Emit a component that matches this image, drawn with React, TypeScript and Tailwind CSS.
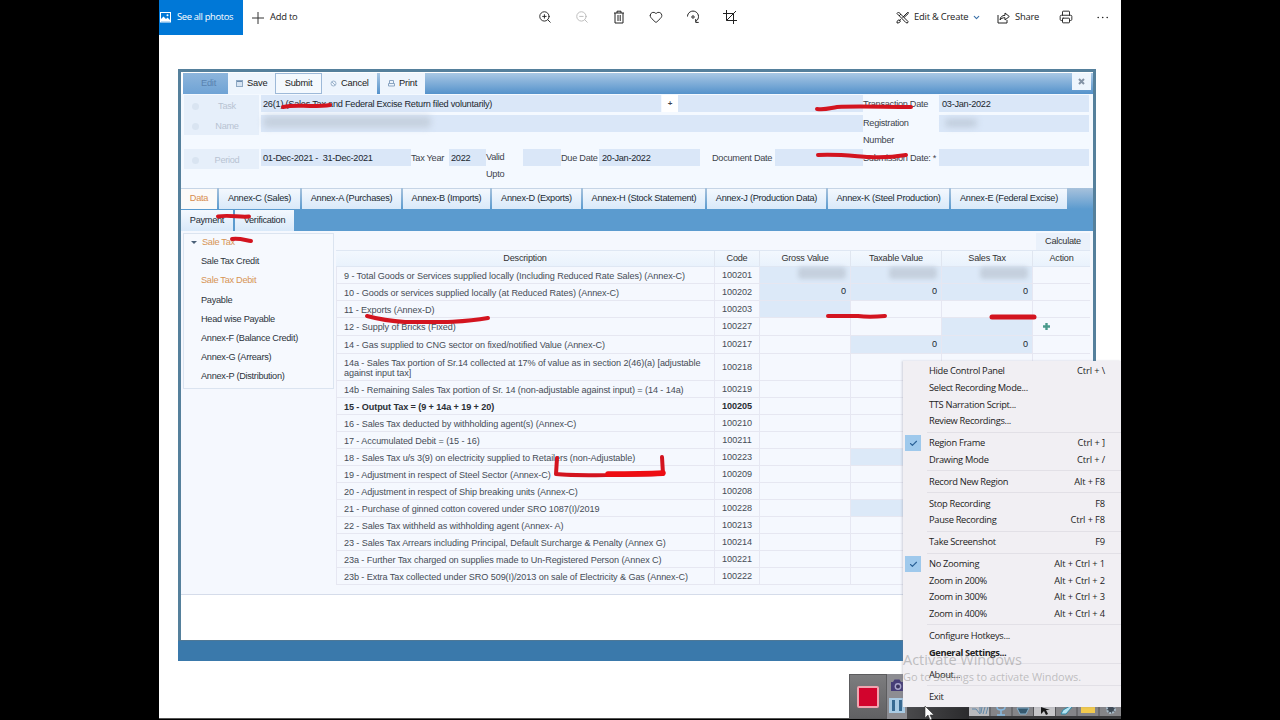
import type { ReactNode } from "react";
import { Check, ChevronDown, Crop, Heart, Printer, ZoomIn, ZoomOut } from "lucide-react";
import clsx from "clsx";

type Cell = "fill" | "zero" | "blur" | "";

interface Row {
  label: string;
  code: string;
  height: string;
  cells: Cell[];
  bold?: boolean;
  add?: boolean;
}

const ROWS: Row[] = [
  { label: "9 - Total Goods or Services supplied locally (Including Reduced Rate Sales) (Annex-C)", code: "100201", height: "h-[17px]", cells: ["blur", "blur", "blur"] },
  { label: "10 - Goods or services supplied locally (at Reduced Rates) (Annex-C)", code: "100202", height: "h-[17px]", cells: ["zero", "zero", "zero"] },
  { label: "11 - Exports (Annex-D)", code: "100203", height: "h-[17px]", cells: ["fill", "", ""] },
  { label: "12 - Supply of Bricks (Fixed)", code: "100227", height: "h-[18px]", cells: ["", "", "fill"], add: true },
  { label: "14 - Gas supplied to CNG sector on fixed/notified Value (Annex-C)", code: "100217", height: "h-[18px]", cells: ["", "zero", "zero"] },
  { label: "14a - Sales Tax portion of Sr.14 collected at 17% of value as in section 2(46)(a) [adjustable against input tax]", code: "100218", height: "h-[27px]", cells: ["", "", ""] },
  { label: "14b - Remaining Sales Tax portion of Sr. 14 (non-adjustable against input) = (14 - 14a)", code: "100219", height: "h-[17px]", cells: ["", "", ""] },
  { label: "15 - Output Tax = (9 + 14a + 19 + 20)", code: "100205", height: "h-[17px]", cells: ["", "", ""], bold: true },
  { label: "16 - Sales Tax deducted by withholding agent(s) (Annex-C)", code: "100210", height: "h-[17px]", cells: ["", "", ""] },
  { label: "17 - Accumulated Debit = (15 - 16)", code: "100211", height: "h-[17px]", cells: ["", "", ""] },
  { label: "18 - Sales Tax u/s 3(9) on electricity supplied to Retailers (non-Adjustable)", code: "100223", height: "h-[17px]", cells: ["", "fill", ""] },
  { label: "19 - Adjustment in respect of Steel Sector (Annex-C)", code: "100209", height: "h-[17px]", cells: ["", "", ""] },
  { label: "20 - Adjustment in respect of Ship breaking units (Annex-C)", code: "100208", height: "h-[17px]", cells: ["", "", ""] },
  { label: "21 - Purchase of ginned cotton covered under SRO 1087(I)/2019", code: "100228", height: "h-[17px]", cells: ["", "fill", ""] },
  { label: "22 - Sales Tax withheld as withholding agent (Annex- A)", code: "100213", height: "h-[17px]", cells: ["", "", ""] },
  { label: "23 - Sales Tax Arrears including Principal, Default Surcharge & Penalty (Annex G)", code: "100214", height: "h-[17px]", cells: ["", "", ""] },
  { label: "23a - Further Tax charged on supplies made to Un-Registered Person (Annex C)", code: "100221", height: "h-[17px]", cells: ["", "", ""] },
  { label: "23b - Extra Tax collected under SRO 509(I)/2013 on sale of Electricity & Gas (Annex-C)", code: "100222", height: "h-[17px]", cells: ["", "", ""] },
];

const TABS = [
  { label: "Data", width: "w-9" },
  { label: "Annex-C (Sales)", width: "w-[81px]" },
  { label: "Annex-A (Purchases)", width: "w-[99px]" },
  { label: "Annex-B (Imports)", width: "w-[87px]" },
  { label: "Annex-D (Exports)", width: "w-[89px]" },
  { label: "Annex-H (Stock Statement)", width: "w-[122px]" },
  { label: "Annex-J (Production Data)", width: "w-[119px]" },
  { label: "Annex-K (Steel Production)", width: "w-[121px]" },
  { label: "Annex-E (Federal Excise)", width: "w-[116px]" },
];

const SIDE_ITEMS = [
  "Sale Tax Credit",
  "Sale Tax Debit",
  "Payable",
  "Head wise Payable",
  "Annex-F (Balance Credit)",
  "Annex-G (Arrears)",
  "Annex-P (Distribution)",
];

interface MenuEntry {
  label: string;
  keys?: string;
  checked?: boolean;
  bold?: boolean;
}

const MENU: MenuEntry[][] = [
  [
    { label: "Hide Control Panel", keys: "Ctrl + \\" },
    { label: "Select Recording Mode..." },
    { label: "TTS Narration Script..." },
    { label: "Review Recordings..." },
  ],
  [
    { label: "Region Frame", keys: "Ctrl + ]", checked: true },
    { label: "Drawing Mode", keys: "Ctrl + /" },
  ],
  [{ label: "Record New Region", keys: "Alt + F8" }],
  [
    { label: "Stop Recording", keys: "F8" },
    { label: "Pause Recording", keys: "Ctrl + F8" },
  ],
  [{ label: "Take Screenshot", keys: "F9" }],
  [
    { label: "No Zooming", keys: "Alt + Ctrl + 1", checked: true },
    { label: "Zoom in 200%", keys: "Alt + Ctrl + 2" },
    { label: "Zoom in 300%", keys: "Alt + Ctrl + 3" },
    { label: "Zoom in 400%", keys: "Alt + Ctrl + 4" },
  ],
  [{ label: "Configure Hotkeys..." }, { label: "General Settings...", bold: true }],
  [{ label: "About..." }],
  [{ label: "Exit" }],
];

function PhotosBar() {
  return (
    <div className="flex h-[35px] items-center text-[9.4px] tracking-[-0.22px] text-[#222] font-['Open_Sans','Noto_Sans',sans-serif] whitespace-nowrap">
      <div className="flex h-full w-[84px] items-center bg-[#0078d7] text-white">
        <svg className="ml-px h-[11px] w-[11px]" viewBox="0 0 11 11">
          <rect x="0.5" y="0.5" width="10" height="9.5" fill="none" stroke="white" />
          <path d="M1 9.5V7l2.500-2.500L6 7l1.500-1.500L10 8v1.500z" fill="white" />
          <circle cx="7.500" cy="3.200" r="1" fill="white" />
        </svg>
        <span className="ml-1.5 tracking-[-0.35px]">See all photos</span>
      </div>
      <svg className="ml-[9px] h-3 w-3" viewBox="0 0 12 12" stroke="#333" fill="none">
        <path d="M6 0v12M0 6h12" />
      </svg>
      <span className="ml-1.5 w-[30px]">Add to</span>
      <div className="mb-px ml-[238px] flex w-[199px] items-center justify-between">
        <ZoomIn size={14} strokeWidth={1.6} />
        <ZoomOut size={14} strokeWidth={1.5} className="text-[#b5b5b5]" />
        <svg className="h-[14px] w-[14px]" viewBox="0 0 14 14" stroke="#222" fill="none">
          <path d="M2 3h10M5 3V1.200h4V3M3 3v10h8V3M6 5v6M8.200 5v6" />
        </svg>
        <Heart size={14} strokeWidth={1.6} />
        <svg className="h-[14px] w-[14px]" viewBox="0 0 14 14" stroke="#222" fill="none">
          <path d="M1.500 6.500a5.500 5.500 0 1 1 8.500 4.700M9.700 9v3.400h3" />
          <circle cx="7" cy="7" r="1.200" />
        </svg>
        <svg className="h-[14px] w-[14px]" viewBox="0 0 14 14" stroke="#222" fill="none">
          <path d="M3.500 0v10.500H14M0 3.500h10.500V14M3.500 10.500 13 1" />
        </svg>
      </div>
      <svg className="mb-px ml-[159px] h-[13px] w-[13px]" viewBox="0 0 13 13" stroke="#222" fill="none">
        <path d="M1 2.500 2.500 1l9.500 9.500-.5 1.500-1.500-.3zM3 5l2-2M11.800 1.200 6.500 6.500M4.800 8.200 3 10M12 1c.6.6.4 1.400 0 1.800L8 6.500M1 12c0-2 .5-3 2-3s1.500 1.500 1 2-1.500 1-3 1z" />
      </svg>
      <span className="ml-[5px] w-[55px]">Edit &amp; Create</span>
      <ChevronDown size={9} strokeWidth={3} className="ml-[3px] text-[#3a70a8]" />
      <svg className="mb-px ml-[16px] h-[13px] w-[13px]" viewBox="0 0 13 13" stroke="#222" fill="none">
        <path d="M1 4v8h9V9M3 9c.3-3 2-4.500 5-4.700V2l4.300 3.500L8 9V6.700C5.500 6.700 4 7.500 3 9z" />
      </svg>
      <span className="ml-[5px] w-[24px]">Share</span>
      <Printer size={14} strokeWidth={1.6} className="mb-px ml-[20px]" />
      <svg className="mb-px ml-[24px] h-1 w-3" viewBox="0 0 12 4" fill="#222">
        <circle cx="1.200" cy="2.500" r=".8" />
        <circle cx="5.700" cy="2.500" r=".8" />
        <circle cx="10.200" cy="2.500" r=".8" />
      </svg>
    </div>
  );
}

function ActionBar() {
  return (
    <div className="ml-0.5 mt-px flex h-[21px] items-stretch bg-linear-to-b from-[#a9c8e4] to-[#5492cb] text-[9.3px] tracking-[-0.2px] text-[#222]">
      <div className="flex w-[45px] items-center justify-center bg-linear-to-b from-[#8db5dc] to-[#6fa3d5] pl-1.5 text-[#5983b0]">Edit</div>
      <div className="flex w-[47px] items-center bg-[#eef5fd] pl-2">
        <svg className="mr-1 h-[7px] w-[7px]" viewBox="0 0 7 7">
          <rect x=".5" y=".5" width="6" height="6" fill="#d7e4f2" stroke="#8fa9c4" />
          <path d="M1 1.500h5" stroke="#6d8cae" />
        </svg>
        Save
      </div>
      <div className="flex w-[47px] items-center justify-center border border-[#9db9d8] bg-[#f4f9fe]">Submit</div>
      <div className="flex w-[55px] items-center bg-[#eef5fd] pl-2">
        <svg className="mr-1 h-[7px] w-[7px]" viewBox="0 0 7 7" fill="none" stroke="#9db4cc">
          <circle cx="3.500" cy="3.500" r="2.500" />
          <path d="M2 2l3 3" />
        </svg>
        Cancel
      </div>
      <div className="ml-[3px] flex w-[45px] items-center bg-[#eef5fd] pl-2">
        <svg className="mr-1 h-[7px] w-[7px]" viewBox="0 0 7 7" fill="none" stroke="#8aa5c2">
          <path d="M1.500 3V.5h4V3M.5 6h6V3.500h-6z" />
        </svg>
        Print
      </div>
      <div className="ml-auto mr-0.5 flex h-[17px] w-[19px] items-center justify-center bg-[#edf5fd]">
        <svg className="h-[7px] w-[7px]" viewBox="0 0 7 7">
          <path d="M1 1l5 5M6 1 1 6" stroke="#8393a5" strokeWidth="2" />
        </svg>
      </div>
    </div>
  );
}

function Caption({ children }: { children: ReactNode }) {
  return (
    <div className="mr-0.5 flex h-5 w-[75px] items-center bg-[#e6effa] pt-0.5 text-[#b8c3d2]">
      <span className="ml-2 h-[7px] w-[7px] rounded-full bg-[#d9e4f1]" />
      <span className="w-[56px] text-center">{children}</span>
    </div>
  );
}

function Field({ width, children }: { width: string; children?: ReactNode }) {
  return <div className={clsx("flex h-[17px] shrink-0 items-center bg-[#dae7f8] pl-0.5 text-[#20262e]", width)}>{children}</div>;
}

function TaskForm() {
  return (
    <div className="flex h-[94px] flex-col bg-[#f4f9ff] pl-[3px] pt-px text-[9.2px] leading-[18px] tracking-[-0.28px] whitespace-nowrap text-[#3c434c]">
      <div className="flex h-5 items-start">
        <Caption>Task</Caption>
        <Field width="w-[400px]">
          <span className="tracking-[-0.25px]">26(1) (Sales Tax and Federal Excise Return filed voluntarily)</span>
        </Field>
        <div className="ml-px flex h-[17px] w-4 items-center justify-center bg-white text-[8px] font-bold">+</div>
        <Field width="w-[185px]" />
        <span className="w-[76px]">Transaction Date</span>
        <Field width="w-[150px]"><span className="pl-px">03-Jan-2022</span></Field>
      </div>
      <div className="flex h-[34px] items-start">
        <Caption>Name</Caption>
        <Field width="w-[602px]">
          <div className="-mt-1 h-3 w-[168px] rounded bg-[#c6d1df] blur-[3px]" />
        </Field>
        <span className="w-[76px] leading-[17px]">Registration<br />Number</span>
        <Field width="w-[150px]">
          <div className="ml-1 -mt-0.5 h-2 w-8 rounded bg-[#c0ccdb] blur-[3px]" />
        </Field>
      </div>
      <div className="flex items-start">
        <Caption>Period</Caption>
        <Field width="w-[150px]">01-Dec-2021 -&nbsp; 31-Dec-2021</Field>
        <span className="w-[38px]">Tax Year</span>
        <Field width="w-[37px]">2022</Field>
        <span className="w-[37px] leading-[17px]">Valid<br />Upto</span>
        <Field width="w-[38px]" />
        <span className="w-[38px]">Due Date</span>
        <Field width="w-[101px]"><span className="pl-px">20-Jan-2022</span></Field>
        <span className="w-[75px] pl-3">Document Date</span>
        <Field width="w-[88px]" />
        <span className="w-[76px]">Submission Date: *</span>
        <Field width="w-[150px]" />
      </div>
    </div>
  );
}

function Tabs() {
  return (
    <div className="bg-[#5b9bcf] text-[9.2px] tracking-[-0.28px] whitespace-nowrap text-[#222a33]">
      <div className="flex h-[21px] gap-0.5 bg-linear-to-b from-[#a7c2dc] to-[#5b9bcf]">
        {TABS.map((tab, i) => (
          <div
            key={tab.label}
            className={clsx(
              "flex items-center justify-center border-t border-[#c6d5e6]",
              tab.width,
              i === 0 ? "bg-[#fbfaf9] text-[#d78c4c]" : "bg-linear-to-b from-[#f3f8fe] to-[#d9e9f9]"
            )}
          >
            {tab.label}
          </div>
        ))}
      </div>
      <div className="flex h-[22px] gap-0.5 pt-px">
        <div className="flex w-[52px] items-center justify-center bg-linear-to-b from-[#f3f8fe] to-[#d9e9f9]">Payment</div>
        <div className="flex w-[59px] items-center justify-center bg-linear-to-b from-[#f3f8fe] to-[#d9e9f9]">Verification</div>
      </div>
    </div>
  );
}

function Sidebar() {
  return (
    <div className="h-[156px] w-[151px] border border-[#dbe4f0] bg-[#f6f9fe] text-[9.2px] tracking-[-0.28px] text-[#2c333c]">
      <div className="flex h-[17px] items-center pl-[7px] text-[#d69455]">
        <svg className="mr-[5px] h-[3px] w-[6px]" viewBox="0 0 6 3">
          <path d="M0 0h6L3 3z" fill="#4b6178" />
        </svg>
        Sale Tax
      </div>
      <div className="pt-px">
        {SIDE_ITEMS.map((item) => (
          <div key={item} className={clsx("flex h-[19.2px] items-center pl-[17px] pt-px", item === "Sale Tax Debit" && "text-[#d69455]")}>
            {item}
          </div>
        ))}
      </div>
    </div>
  );
}

function ValueCell({ kind }: { kind: Cell }) {
  return (
    <div className={clsx("flex w-[91px] items-center justify-end border-l border-[#e6e7f2] pr-[4px] text-[#20262e]", kind && "bg-[#dce9f8]")}>
      {kind === "zero" && "0"}
      {kind === "blur" && <div className="-mt-1 h-3 w-[48px] rounded bg-[#c5d0de] blur-[2px]" />}
    </div>
  );
}

function LedgerTable() {
  return (
    <div className="ml-[2px] w-[754px] text-[9.1px] text-[#454c56]">
      <div className="flex h-[17px] justify-end">
        <div className="flex w-[54px] items-center justify-center bg-[#eaf1fb] text-[9.2px] tracking-[-0.28px] text-[#333]">Calculate</div>
      </div>
      <div className="flex h-[17px] border-y border-[#dfe7f3] bg-linear-to-b from-[#f3f8fe] to-[#e9f2fc] tracking-[-0.2px] text-[#333] *:flex *:items-center *:justify-center">
        <div className="w-[378px]">Description</div>
        <div className="w-[45px] border-l border-[#e0e6f0]">Code</div>
        <div className="w-[91px] border-l border-[#e0e6f0]">Gross Value</div>
        <div className="w-[91px] border-l border-[#e0e6f0]">Taxable Value</div>
        <div className="w-[91px] border-l border-[#e0e6f0]">Sales Tax</div>
        <div className="flex-1 border-l border-[#e0e6f0]">Action</div>
      </div>
      {ROWS.map((row) => (
        <div key={row.code} className={clsx("flex border-b border-[#e6e7f1]", row.height, row.bold && "font-bold text-[#2a2f36]")}>
          <div className="flex w-[378px] items-center border-l border-[#e6e7f2] pl-[7px] pt-px leading-[10px] tracking-[-0.09px]">
            <span className="w-[366px]">{row.label}</span>
          </div>
          <div className="flex w-[45px] items-center justify-center border-l border-[#e6e7f2] pt-px tracking-[-0.05px]">{row.code}</div>
          {row.cells.map((kind, i) => (
            <ValueCell key={i} kind={kind} />
          ))}
          <div className="flex flex-1 items-center border-l border-[#e6e7f2] pl-[10px]">
            {row.add && (
              <svg className="h-[7px] w-[7px]" viewBox="0 0 7 7">
                <path d="M3.500 0v7M0 3.500h7" stroke="#4a9a8c" strokeWidth="2.400" />
              </svg>
            )}
          </div>
        </div>
      ))}
    </div>
  );
}

function TaxWindow() {
  return (
    <div className="ml-[19px] mt-[34px] h-[592px] w-[918px] border-[3px] border-b-0 border-[#55809c] bg-white font-['Liberation_Sans',Arial,sans-serif]">
      <ActionBar />
      <TaskForm />
      <Tabs />
      <div className="flex h-[364px] border-b border-[#d5dcea] bg-[#f5f8fe] pl-0.5 pt-0.5">
        <Sidebar />
        <LedgerTable />
      </div>
      <div className="h-[45px]" />
      <div className="-mx-[3px] h-[21px] border-t border-[#4f7896] bg-[#3a79ab]" />
    </div>
  );
}

function ContextMenu() {
  return (
    <div className="absolute left-[903px] top-[361px] h-[346px] w-[218px] bg-[#f1eff3] pt-0.5 text-[9.3px] whitespace-nowrap text-[#222] shadow-[-1px_0_2px_rgba(120,120,140,0.3)] font-['Open_Sans','Noto_Sans',sans-serif]">
      {MENU.map((group, i) => (
        <div key={i}>
          {i > 0 && <div className="ml-6 flex h-[5.4px] items-center"><div className="h-px w-full bg-[#e2e0e6]" /></div>}
          {group.map((entry) => (
            <div key={entry.label} className="flex h-[16.6px] items-center pr-4">
              <div className={clsx("ml-0.5 mr-2 flex h-4 w-4 items-center justify-center", entry.checked && "bg-[#9fc9ec]")}>
                {entry.checked && <Check size={9} strokeWidth={3} className="text-[#2b6297]" />}
              </div>
              <span className={entry.bold ? "font-bold tracking-[-0.37px]" : "tracking-[-0.31px]"}>{entry.label}</span>
              <span className="ml-auto tracking-[-0.12px]">{entry.keys}</span>
            </div>
          ))}
        </div>
      ))}
    </div>
  );
}

function Watermark() {
  return (
    <div className="absolute left-[903px] top-[651px] whitespace-nowrap text-[#8a8a8a]/50 font-['Open_Sans','Noto_Sans',sans-serif]">
      <div className="h-[18px] text-[14.5px] leading-[18px]">Activate Windows</div>
      <div className="text-[11px] leading-4 tracking-[-0.06px]">Go to Settings to activate Windows.</div>
    </div>
  );
}

function RecorderPanel() {
  return (
    <div className="absolute left-[849px] top-[674px] flex h-[45px] w-[272px] bg-[#3a3a3c]">
      <div className="flex w-[38px] items-center justify-center border border-[#5c5c5e] bg-linear-to-b from-[#7d7d7f] to-[#616163]">
        <div className="h-[22px] w-[22px] rounded-[2px] border-2 border-[#f0a5b0] bg-[#d2042d]" />
      </div>
      <div className="flex w-5 flex-col items-center gap-1 bg-[#8d8d92] pt-[4px]">
        <svg className="h-4 w-[18px]" viewBox="0 0 18 16">
          <path d="M3 4h2l1.500-2.500h5L13 4h5v9H3z" fill="#463d78" />
          <circle cx="10" cy="8.500" r="3.400" fill="#a9a5cc" />
          <circle cx="10" cy="8.500" r="2" fill="#39315f" />
        </svg>
        <div className="flex h-[15px] w-4 justify-center gap-1 bg-[#a9cbe4] py-0.5">
          <div className="h-full w-[3px] bg-[#376a92]" />
          <div className="h-full w-[3px] bg-[#376a92]" />
        </div>
      </div>
      <div className="w-[62px] bg-linear-to-r from-[#4a4a4c] to-[#2b2b2d]" />
      <svg className="mt-auto h-3 w-[152px]" viewBox="0 0 152 12">
        <rect width="152" height="9" fill="#858588" />
        <rect width="20" height="9" fill="#b9babd" />
        <rect x="65" width="21" height="9" fill="#c5c5c8" />
        <path d="M21 0v9M43 0v9M64.500 0v9M86.500 0v9M108 0v9M130 0v9" stroke="#525255" />
        <path d="M3 2h4l4 5V0M13 0l-1 6M16 0l-2 7M19 0l-2 7" stroke="#6289a8" fill="none" />
        <path d="M28 0c0 4 8 4 8 0M32 3v5M28 8h8" stroke="#87b9e0" fill="none" strokeWidth="1.500" />
        <path d="M48 1h12l-3 6h-6z" fill="#36596f" stroke="#86b2cd" />
        <path d="M72 0v7l3-3 2 4 2-1-2-4h4z" fill="#171717" />
        <path d="M92 7l2-4 7-4 2 1-6 7z" fill="#b4e4f2" stroke="#328aa6" />
        <path d="M112 0h14v6h-14z" fill="#f1c94d" />
        <circle cx="142" cy="2" r="4" fill="#404b56" stroke="#a5b8c5" strokeWidth="2" strokeDasharray="2 1" />
      </svg>
    </div>
  );
}

// Freehand marker strokes over the form
function Marker() {
  return (
    <svg className="pointer-events-none absolute inset-0 h-[720px] w-[1280px]" viewBox="0 0 1280 720" fill="none" stroke="#d3141f" strokeWidth="4" strokeLinecap="round" strokeLinejoin="round">
      <path d="M283 107c10-2 18-1 27-1s14 0 20-1" />
      <path d="M817 109c9 1 13-1 20-2 20-1 47 0 74 0" />
      <path d="M818 155c20-1 35 1 51 2 14 1 25 0 37-2" />
      <path d="M218 216.500c11-2 21 1 31 0" />
      <path d="M232 239c7-1 13 1 19 2" />
      <path d="M367 316c11 3 21 5 38 6 28 0 56 1 83-4" />
      <path d="M828 316h30c8 1 15 1 27 0" />
      <path d="M992 317h42" strokeWidth="5" />
      <path d="M557 458l-1 16c18 2 80 1 107 0l-1-17" />
      <path d="M608 474c20 0 35 0 55-1" stroke="#ee0d12" strokeWidth="5.500" />
    </svg>
  );
}

export default function App() {
  return (
    <div className="relative h-[720px] w-[1280px] overflow-hidden bg-black">
      <div className="ml-[159px] h-[719px] w-[962px] border-b border-[#555] bg-white">
        <PhotosBar />
        <TaxWindow />
      </div>
      <RecorderPanel />
      <ContextMenu />
      <Watermark />
      <Marker />
      <svg className="absolute left-[924px] top-[705px] h-[15px] w-3" viewBox="0 0 12 15">
        <path d="M1 1v12l3-3 2 5 2-1-2-4h4z" fill="white" stroke="#333" strokeWidth=".6" />
      </svg>
    </div>
  );
}
